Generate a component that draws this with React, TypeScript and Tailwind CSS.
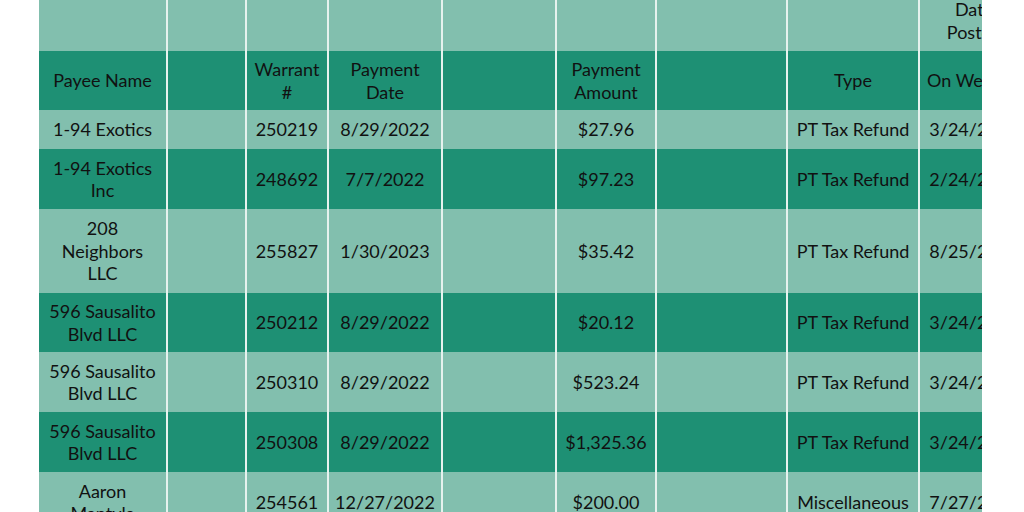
import React from "react";

interface Payment {
  payee: string;
  warrant: string;
  date: string;
  amount: string;
  type: string;
  posted: string;
  height: string;
}

const rows: Payment[] = [
  { payee: "1-94 Exotics", warrant: "250219", date: "8/29/2022", amount: "$27.96", type: "PT Tax Refund", posted: "3/24/2023", height: "h-[39px]" },
  { payee: "1-94 Exotics Inc", warrant: "248692", date: "7/7/2022", amount: "$97.23", type: "PT Tax Refund", posted: "2/24/2023", height: "h-[60px]" },
  { payee: "208 Neighbors LLC", warrant: "255827", date: "1/30/2023", amount: "$35.42", type: "PT Tax Refund", posted: "8/25/2023", height: "h-[84px]" },
  { payee: "596 Sausalito Blvd LLC", warrant: "250212", date: "8/29/2022", amount: "$20.12", type: "PT Tax Refund", posted: "3/24/2023", height: "h-[59px]" },
  { payee: "596 Sausalito Blvd LLC", warrant: "250310", date: "8/29/2022", amount: "$523.24", type: "PT Tax Refund", posted: "3/24/2023", height: "h-[60px]" },
  { payee: "596 Sausalito Blvd LLC", warrant: "250308", date: "8/29/2022", amount: "$1,325.36", type: "PT Tax Refund", posted: "3/24/2023", height: "h-[60px]" },
  { payee: "Aaron Mantyla", warrant: "254561", date: "12/27/2022", amount: "$200.00", type: "Miscellaneous", posted: "7/27/2023", height: "h-[60px]" },
];

const cols = "grid grid-cols-[129px_79px_82px_114px_114px_100px_131px_132px_108px]";
const cell = "flex items-center justify-center text-center px-2 border-r-2 border-[#e6f2ee]";
const lastCell = "flex items-center justify-center text-center px-2";
const light = "bg-[#82bfae]";
const dark = "bg-[#1e9074]";

function Row({ cells, className }: { cells: React.ReactNode[]; className: string }) {
  return (
    <div className={`${cols} ${className}`}>
      {cells.map((c, i) => (
        <div key={i} className={i === cells.length - 1 ? lastCell : cell}>
          {c}
        </div>
      ))}
    </div>
  );
}

export default function App() {
  return (
    <div className="w-[1024px] h-[512px] overflow-hidden bg-white pl-[39px] font-['Lato',sans-serif] text-[18px] leading-[22.5px] text-[#111]">
      <div className="w-[943px] overflow-hidden">
        <div className="w-[989px]">
          <div className={`${cols} ${light} h-[51px]`}>
            {Array.from({ length: 8 }).map((_, i) => (
              <div key={i} className="border-r-2 border-[#e6f2ee]" />
            ))}
            <div className="flex flex-col items-center text-center leading-[23px] -mt-[2px]">
              <span>Date</span>
              <span>Posted</span>
            </div>
          </div>
          <Row
            className={`${dark} h-[59px]`}
            cells={[
              "Payee Name",
              "",
              <>Warrant<br />#</>,
              <>Payment<br />Date</>,
              "",
              <>Payment<br />Amount</>,
              "",
              "Type",
              <span className="whitespace-nowrap">On Website</span>,
            ]}
          />
          {rows.map((r, i) => (
            <Row
              key={i}
              className={`${i % 2 === 0 ? light : dark} ${r.height}`}
              cells={[r.payee, "", r.warrant, r.date, "", r.amount, "", r.type, r.posted]}
            />
          ))}
        </div>
      </div>
    </div>
  );
}
